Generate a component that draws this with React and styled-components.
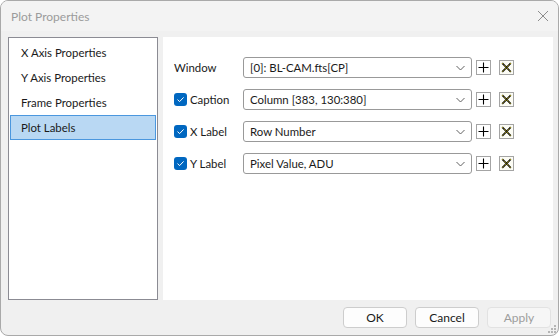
import React from "react";
import styled, { createGlobalStyle } from "styled-components";

const Global = createGlobalStyle`
  html, body {
    margin: 0;
    padding: 0;
    background: #ffffff;
  }
  * {
    box-sizing: border-box;
  }
`;

const Frame = styled.div`
  position: relative;
  width: 559px;
  height: 336px;
  display: flex;
  flex-direction: column;
  border: 1px solid #a9a9a9;
  border-radius: 8px;
  overflow: hidden;
  background: #f0f0f0;
  font-family: "Segoe UI", Lato, "Noto Sans", sans-serif;
  font-size: 11.4px;
  color: #1a1a1a;
`;

const TitleBar = styled.div`
  height: 30px;
  flex: none;
  display: flex;
  align-items: center;
  justify-content: space-between;
  padding: 0 9px 0 10px;
  background: #f3f3f3;
  color: #9b9b9b;
  font-size: 12px;
`;

const Body = styled.div`
  flex: 1;
  display: flex;
  gap: 5px;
  padding: 6px 5px 0 7px;
  min-height: 0;
`;

const Sidebar = styled.div`
  width: 150px;
  flex: none;
  background: #ffffff;
  border: 1px solid #8b8b93;
  padding: 2px 1px;
  display: flex;
  flex-direction: column;
`;

const NavItem = styled.div`
  height: 25px;
  display: flex;
  align-items: center;
  padding-left: 10px;
  border: 1px solid ${(p) => (p.$active ? "#4b97de" : "transparent")};
  background: ${(p) => (p.$active ? "#b9d8f3" : "transparent")};
`;

const Content = styled.div`
  flex: 1;
  background: #ffffff;
  padding: 20px 0 0 11px;
  display: flex;
  flex-direction: column;
  gap: 11px;
`;

const Row = styled.div`
  height: 21px;
  display: flex;
  align-items: center;
`;

const LabelCell = styled.label`
  width: 69px;
  flex: none;
  display: flex;
  align-items: center;
  gap: 3px;
`;

const Check = styled.span`
  width: 13px;
  height: 13px;
  border-radius: 3px;
  background: #0067c0;
  display: flex;
  align-items: center;
  justify-content: center;
`;

const Combo = styled.div`
  width: 229px;
  height: 21px;
  flex: none;
  display: flex;
  align-items: center;
  justify-content: space-between;
  padding: 0 6px 0 6px;
  border: 1px solid #999999;
  border-radius: 3px;
  background: #ffffff;
`;

const SmallButton = styled.span`
  width: 15px;
  height: 15px;
  flex: none;
  margin-left: ${(p) => p.$gap}px;
  display: flex;
  align-items: center;
  justify-content: center;
  border: 1px solid #a4a4a4;
  background: ${(p) => p.$bg || "#ffffff"};
`;

const Footer = styled.div`
  height: 35px;
  flex: none;
  display: flex;
  justify-content: flex-end;
  gap: 8px;
  padding: 7px 7px 0 0;
`;

const Button = styled.button`
  width: 64px;
  height: 21px;
  font: inherit;
  font-size: 12px;
  border-radius: 4px;
  border: 1px solid ${(p) => (p.disabled ? "#e2e2e2" : "#cdcdcd")};
  background: ${(p) => (p.disabled ? "#f6f6f6" : "#fdfdfd")};
  color: ${(p) => (p.disabled ? "#9d9d9d" : "#1a1a1a")};
  padding: 0;
`;

const Grip = styled.svg`
  position: absolute;
  right: 2px;
  bottom: 2px;
`;

const CheckMark = () => (
  <svg width="9" height="9" viewBox="0 0 9 9">
    <path d="M1.5 4.6 L3.6 6.6 L7.6 2.4" fill="none" stroke="#ffffff" strokeWidth="1" />
  </svg>
);

const Chevron = () => (
  <svg width="9" height="6" viewBox="0 0 9 6">
    <path d="M0.5 1 L4.5 5 L8.5 1" fill="none" stroke="#606060" strokeWidth="1" />
  </svg>
);

const Plus = () => (
  <svg width="11" height="11" viewBox="0 0 11 11">
    <path d="M5.5 0.5 V10.5 M0.5 5.5 H10.5" stroke="#000" strokeWidth="1.1" />
  </svg>
);

const Cross = () => (
  <svg width="11" height="11" viewBox="0 0 11 11">
    <path d="M1.2 1.2 L9.8 9.8 M9.8 1.2 L1.2 9.8" stroke="#111" strokeWidth="1.7" />
    <path
      d="M1.2 1.2 L9.8 9.8 M9.8 1.2 L1.2 9.8"
      stroke="#e3d000"
      strokeWidth="0.9"
      strokeDasharray="1 1.3"
    />
  </svg>
);

const rows = [
  { label: "Window", value: "[0]: BL-CAM.fts[CP]", check: false },
  { label: "Caption", value: "Column [383, 130:380]", check: true },
  { label: "X Label", value: "Row Number", check: true },
  { label: "Y Label", value: "Pixel Value, ADU", check: true },
];

const nav = ["X Axis Properties", "Y Axis Properties", "Frame Properties", "Plot Labels"];

export default function App() {
  return (
    <>
      <Global />
      <Frame>
        <TitleBar>
          <span>Plot Properties</span>
          <svg width="12" height="12" viewBox="0 0 12 12">
            <path d="M1 1 L11 11 M11 1 L1 11" stroke="#8c8c8c" strokeWidth="1" />
          </svg>
        </TitleBar>
        <Body>
          <Sidebar>
            {nav.map((n) => (
              <NavItem key={n} $active={n === "Plot Labels"}>
                {n}
              </NavItem>
            ))}
          </Sidebar>
          <Content>
            {rows.map((r) => (
              <Row key={r.label}>
                <LabelCell>
                  {r.check && (
                    <Check>
                      <CheckMark />
                    </Check>
                  )}
                  {r.label}
                </LabelCell>
                <Combo>
                  <span>{r.value}</span>
                  <Chevron />
                </Combo>
                <SmallButton $gap={4}>
                  <Plus />
                </SmallButton>
                <SmallButton $gap={8} $bg="#fcfcf4">
                  <Cross />
                </SmallButton>
              </Row>
            ))}
          </Content>
        </Body>
        <Footer>
          <Button>OK</Button>
          <Button>Cancel</Button>
          <Button disabled>Apply</Button>
        </Footer>
        <Grip width="8" height="8" viewBox="0 0 8 8">
          {[
            [6, 0],
            [6, 3],
            [3, 3],
            [6, 6],
            [3, 6],
            [0, 6],
          ].map(([x, y]) => (
            <rect key={`${x}-${y}`} x={x} y={y} width="2" height="2" fill="#b5b5b5" />
          ))}
        </Grip>
      </Frame>
    </>
  );
}
